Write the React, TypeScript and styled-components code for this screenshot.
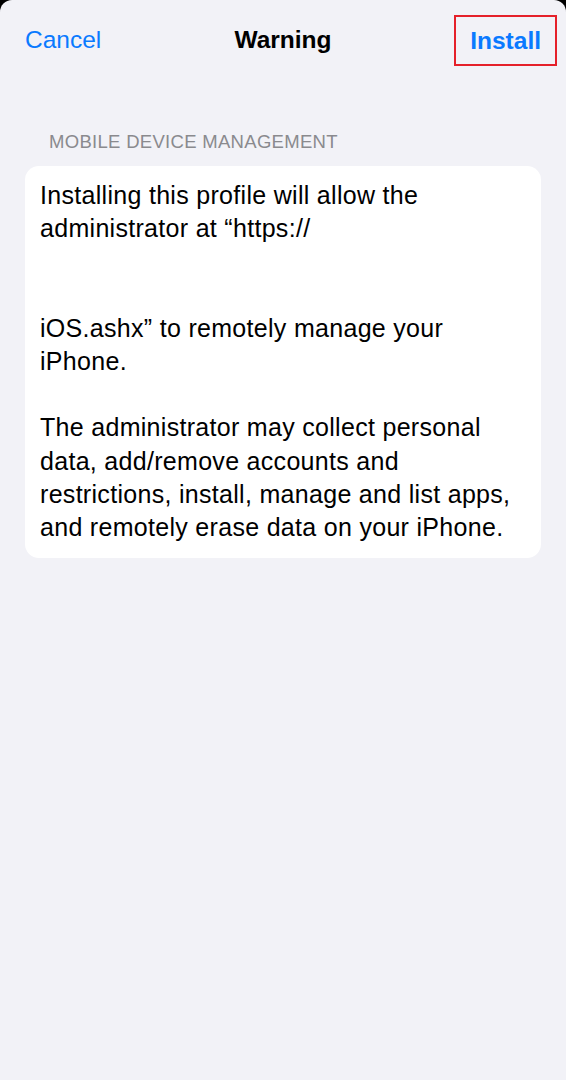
import styled, { createGlobalStyle } from "styled-components";

const Global = createGlobalStyle`
  html, body {
    margin: 0;
    padding: 0;
    background: #000;
  }
  body {
    font-family: "Liberation Sans", Arial, sans-serif;
    -webkit-font-smoothing: antialiased;
  }
`;

const Sheet = styled.div`
  min-height: 1080px;
  background: #f2f2f7;
  border-radius: 12px 12px 0 0;
  box-sizing: border-box;
`;

const NavBar = styled.div`
  display: grid;
  grid-template-columns: 1fr auto 1fr;
  align-items: center;
  height: 80px;
  padding: 0 9px;
`;

const NavButton = styled.button<{ $bold?: boolean; $align?: string }>`
  justify-self: ${(p) => p.$align || "start"};
  background: none;
  border: 0;
  padding: 0 0 0 ${(p) => (p.$bold ? 0 : 16)}px;
  font-family: inherit;
  font-size: 24.5px;
  font-weight: ${(p) => (p.$bold ? 700 : 400)};
  color: #0a7aff;
  cursor: pointer;
`;

const Highlight = styled.span`
  display: inline-block;
  border: 2px solid #e5202a;
  padding: 10px 14px 9px 14px;
`;

const Title = styled.h1`
  margin: 0;
  font-size: 24.5px;
  font-weight: 700;
  color: #000;
`;

const Section = styled.section`
  padding: 51px 25px 0;
`;

const SectionHeader = styled.div`
  padding: 0 0 13px 24px;
  font-size: 18.5px;
  line-height: 22px;
  color: #8a8a8e;
  letter-spacing: 0.3px;
`;

const Card = styled.div`
  background: #fff;
  border-radius: 14px;
  padding: 13px 15px 14px;
`;

const Para = styled.p`
  margin: 0;
  font-size: 25px;
  line-height: 33.2px;
  letter-spacing: 0.3px;
  color: #000;
`;

export default function App() {
  return (
    <>
      <Global />
      <Sheet>
        <NavBar>
          <NavButton>Cancel</NavButton>
          <Title>Warning</Title>
          <NavButton $bold $align="end">
            <Highlight>Install</Highlight>
          </NavButton>
        </NavBar>
        <Section>
          <SectionHeader>MOBILE DEVICE MANAGEMENT</SectionHeader>
          <Card>
            <Para>
              Installing this profile will allow the
              <br />
              administrator at “https://
              <br />
              <br />
              <br />
              iOS.ashx” to remotely manage your
              <br />
              iPhone.
              <br />
              <br />
              The administrator may collect personal
              <br />
              data, add/remove accounts and
              <br />
              restrictions, install, manage and list apps,
              <br />
              and remotely erase data on your iPhone.
            </Para>
          </Card>
        </Section>
      </Sheet>
    </>
  );
}
